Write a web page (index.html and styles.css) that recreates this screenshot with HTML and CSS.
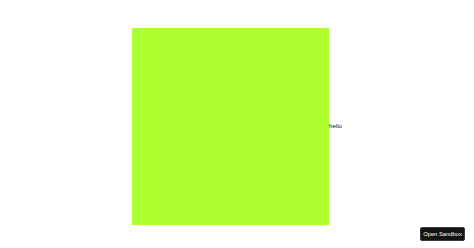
FILE: index.html
```html
<!DOCTYPE html>
<html lang="en">
<head>
    <meta charset="UTF-8">
    <meta name="viewport" content="width=device-width, initial-scale=1.0">
    <title>Sandbox</title>
    <link rel="stylesheet" href="styles.css">
</head>
<body>
    <div class="stage">
        <div class="box"></div>
        <span class="label">hello</span>
    </div>

    <a class="open-btn" href="#">Open Sandbox</a>
</body>
</html>
```

FILE: styles.css
```css
body {
    margin: 0;
    font-family: 'Liberation Sans', Arial, sans-serif;
    background: #ffffff;
    color: #111;
}

.stage {
    box-sizing: border-box;
    min-height: 100vh;
    padding-top: 5px;
    display: flex;
    justify-content: center;
    align-items: center;
}

.box {
    width: 197px;
    height: 197px;
    background: #adff2f;
}

.label {
    font-size: 6.2px;
    line-height: 1;
}

/* floating sandbox link */
.open-btn {
    position: fixed;
    right: 9px;
    bottom: 7px;
    box-sizing: border-box;
    height: 14px;
    width: 45px;
    display: flex;
    align-items: center;
    justify-content: center;
    background: #151515;
    border: 1px solid #3a3a3a;
    border-radius: 2px;
    color: #fff;
    font-size: 5.8px;
    text-decoration: none;
}
```
